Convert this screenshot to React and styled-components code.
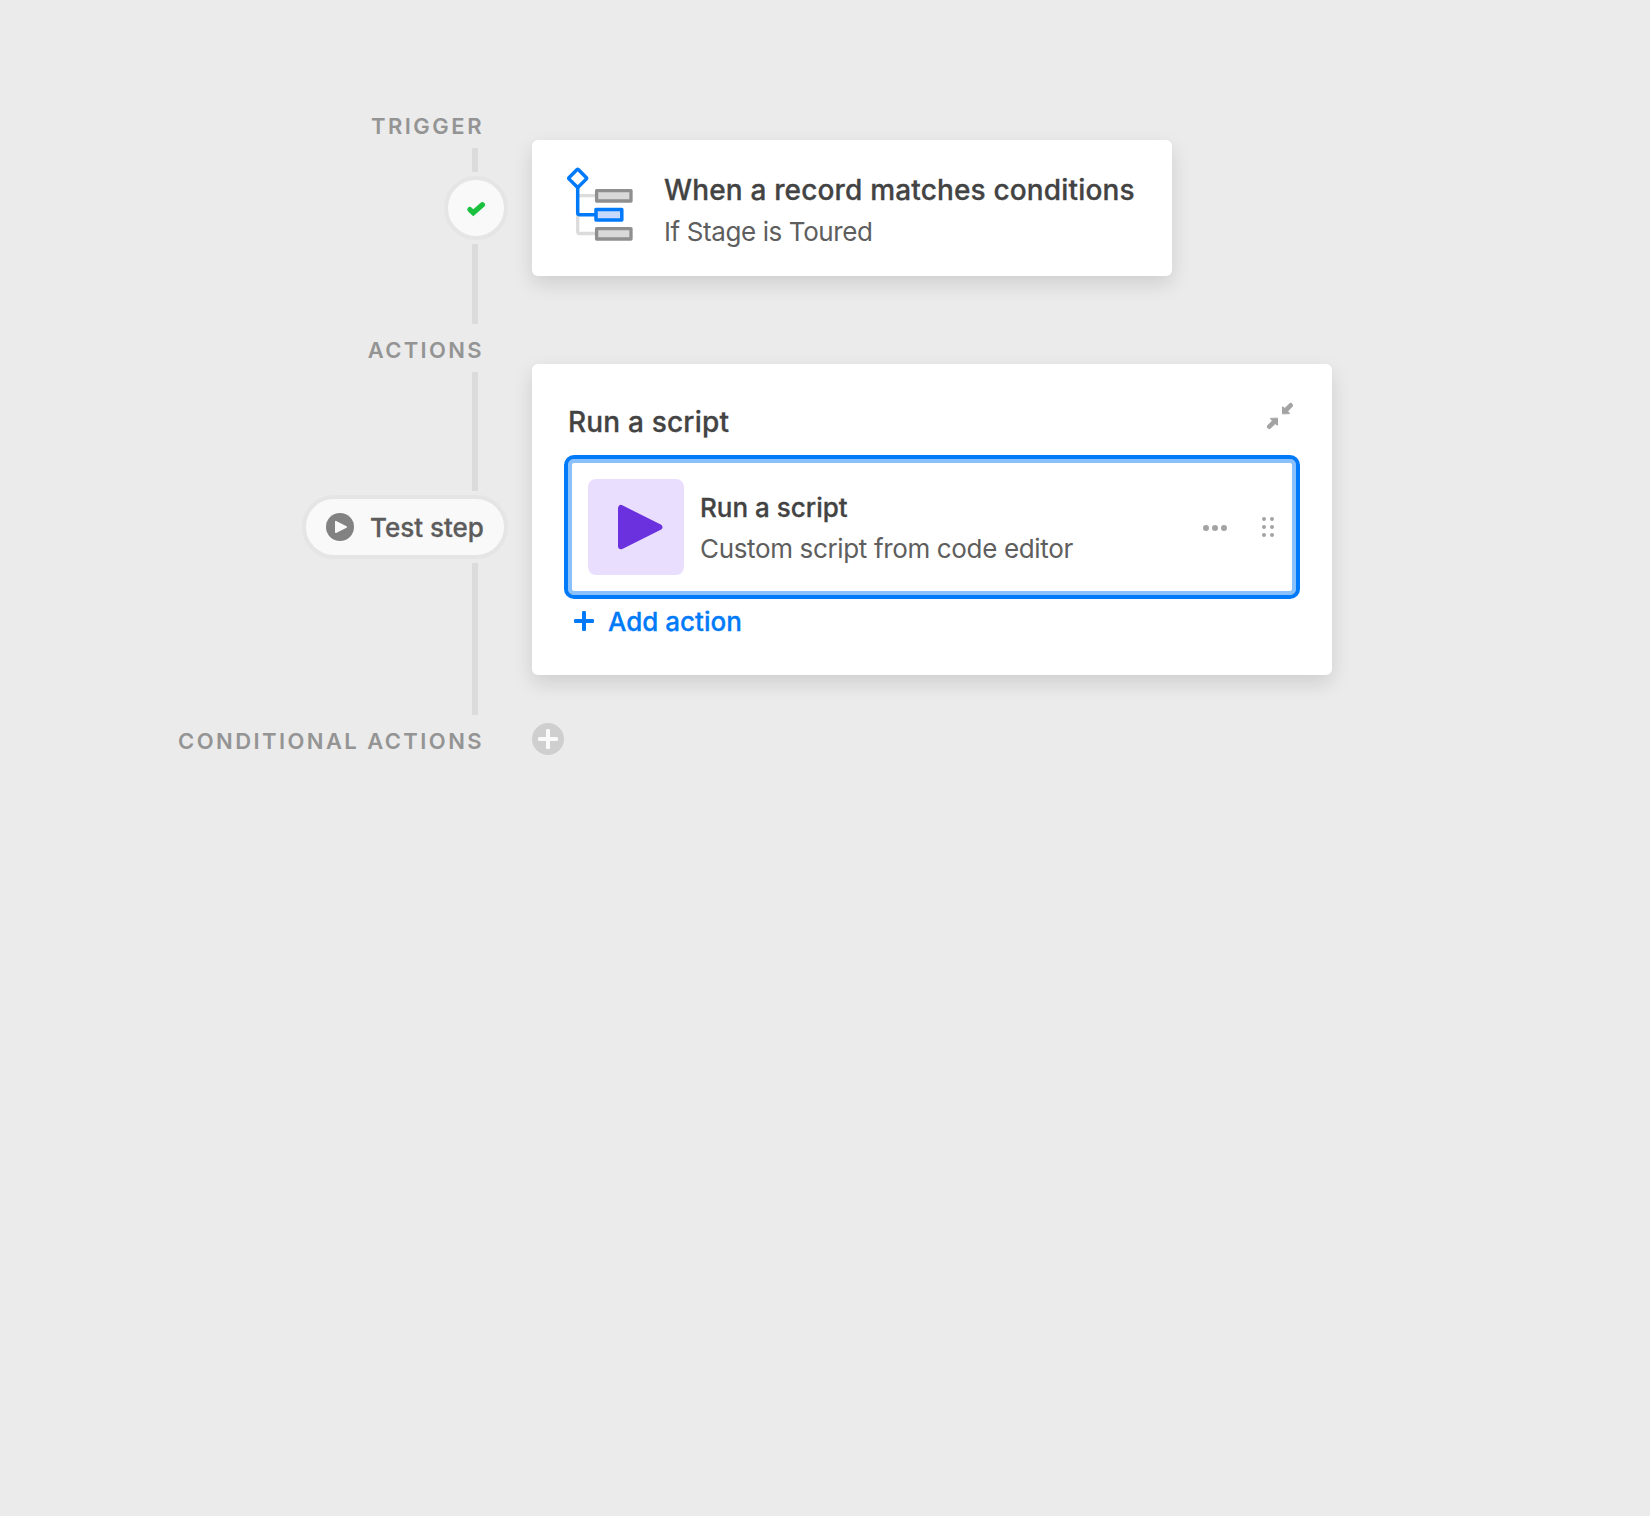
import React from "react";
import styled, { createGlobalStyle } from "styled-components";

const GlobalStyle = createGlobalStyle`
  *, *::before, *::after { box-sizing: border-box; }
  body {
    margin: 0;
    background: #ebebeb;
    font-family: Inter, "Liberation Sans", sans-serif;
    -webkit-font-smoothing: antialiased;
  }
  svg { display: block; flex: none; }
  button { font: inherit; border: 0; padding: 0; background: none; cursor: pointer; }
`;

const Canvas = styled.main`
  min-height: 1516px;
  padding-top: 110px;
  display: flex;
  flex-direction: column;
  gap: 10px;
`;

const Section = styled.section`
  display: grid;
  grid-template-columns: 508px 1fr;
  column-gap: 24px;
  align-items: start;
`;

const Rail = styled.div`
  display: flex;
  flex-direction: column;
  align-items: flex-end;
  gap: 4px;
`;

const RailLabel = styled.h2`
  margin: 0 24px 2px 0;
  font-size: 22px;
  font-weight: 600;
  line-height: 32px;
  letter-spacing: ${(p) => p.$tracking}px;
  text-transform: uppercase;
  white-space: nowrap;
  color: #949494;
`;

const Connector = styled.div`
  width: 6px;
  height: ${(p) => p.$length}px;
  margin-right: 30px;
  background: #dbdbdb;
`;

const StatusBadge = styled.div`
  width: 64px;
  height: 64px;
  border: 4px solid #e5e5e5;
  border-radius: 32px;
  background: #f9f9f9;
  display: flex;
  align-items: center;
  justify-content: center;
`;

const TestButton = styled.button`
  && {
    width: 206px;
    height: 64px;
    padding-left: 20px;
    border: 4px solid #e5e5e5;
    border-radius: 32px;
    background: #f9f9f9;
  }
  display: flex;
  align-items: center;
  gap: 16px;
`;

const TestLabel = styled.span`
  margin-top: 1px;
  font-size: 26px;
  font-weight: 500;
  line-height: 33px;
  color: #5c5c5c;
  -webkit-text-stroke: 0.3px currentColor;
`;

const Card = styled.article`
  width: ${(p) => p.$width}px;
  margin-top: 30px;
  border-radius: 6px;
  background: #fff;
  box-shadow: 0 8px 20px rgba(0, 0, 0, 0.12);
`;

const TriggerBody = styled.div`
  height: 136px;
  display: flex;
  align-items: flex-start;
  gap: 28px;
  padding: 24px 32px 0;
`;

const TriggerText = styled.div`
  display: flex;
  flex-direction: column;
  gap: 7px;
  padding-top: 8px;
`;

const Title = styled.h3`
  margin: 0;
  font-size: 28px;
  font-weight: 500;
  line-height: 36px;
  letter-spacing: ${(p) => p.$tracking || 0}px;
  color: #434343;
  -webkit-text-stroke: 0.3px currentColor;
  white-space: nowrap;
`;

const Subtitle = styled.p`
  margin: 0;
  font-size: 26px;
  line-height: 33px;
  letter-spacing: ${(p) => p.$tracking || 0}px;
  color: #5e5e5e;
  white-space: nowrap;
`;

const ActionsBody = styled.div`
  padding: 32px 32px 37px;
`;

const CardHeader = styled.header`
  height: 59px;
  padding: 4px 4px 0;
  display: flex;
  justify-content: space-between;

  ${Title} { margin-top: 4px; }
`;

const SelectedStep = styled.div`
  height: 144px;
  padding: 20px 22px 20px 20px;
  border: 4px solid #007af8;
  border-radius: 10px;
  box-shadow: inset 0 0 0 4px #8bc1fb;
  display: flex;
  align-items: center;
`;

const ScriptTile = styled.div`
  width: 96px;
  height: 96px;
  border-radius: 8px;
  background: #eadeff;
`;

const StepText = styled.div`
  flex: 1;
  margin: 2px 0 0 16px;
  display: flex;
  flex-direction: column;
  gap: 8px;
`;

const StepName = styled.h4`
  margin: 0;
  font-size: 26px;
  font-weight: 500;
  line-height: 33px;
  color: #434343;
  -webkit-text-stroke: 0.3px currentColor;
`;

const StepTools = styled.div`
  display: flex;
  align-items: center;
  gap: 35px;
`;

const MoreButton = styled.button`
  && { padding-top: 2px; }
`;

const AddAction = styled.button`
  && {
    margin-top: 6px;
    padding-left: 10px;
    font-size: 26px;
    font-weight: 500;
  }
  display: flex;
  align-items: flex-start;
  gap: 14px;
  line-height: 33px;
  color: #007af8;
  -webkit-text-stroke: 0.3px currentColor;

  svg { margin-top: 6px; }
`;

const AddGroup = styled.button`
  && { background: #cfcfcf; }
  width: 32px;
  height: 32px;
  margin-top: -2px;
  border-radius: 50%;
  display: flex;
  align-items: center;
  justify-content: center;
  color: #fafafa;
`;

const CheckIcon = () => (
  <svg width="32" height="32" viewBox="0 0 32 32" fill="none">
    <path d="M9.9 17.6L13.3 20.8L22.4 12.7" stroke="#19c13f" strokeWidth="5.2" strokeLinecap="round" />
  </svg>
);

const PlayCircleIcon = () => (
  <svg width="28" height="28" viewBox="0 0 28 28">
    <circle cx="14" cy="14" r="14" fill="#828282" />
    <path d="M9.8 8.7V19.3L20.2 14Z" fill="#f9f9f9" stroke="#f9f9f9" strokeWidth="1.6" strokeLinejoin="round" />
  </svg>
);

const ConditionIcon = () => (
  <svg width="72" height="80" viewBox="0 0 72 80" fill="none">
    <path d="M14 31.7H31M13.7 48V67.5Q13.7 69.5 15.7 69.5H31" stroke="#dcdcdc" strokeWidth="3.3" />
    <rect x="32.6" y="26.6" width="34.4" height="10.4" fill="#d9d9d9" stroke="#8f8f8f" strokeWidth="3.3" strokeLinejoin="round" />
    <rect x="32.6" y="64.6" width="34.4" height="10.4" fill="#d9d9d9" stroke="#8f8f8f" strokeWidth="3.3" strokeLinejoin="round" />
    <path d="M13.7 24V48.7Q13.7 50.7 15.7 50.7H31" stroke="#007af8" strokeWidth="3.5" />
    <rect x="32" y="45.6" width="25.8" height="10.4" fill="#c5dafd" stroke="#007af8" strokeWidth="3.5" strokeLinejoin="round" />
    <rect x="7.1" y="7.7" width="13.2" height="13.2" rx="0.8" transform="rotate(45 13.7 14.3)" fill="#fff" stroke="#007af8" strokeWidth="3.5" strokeLinejoin="round" />
  </svg>
);

const CollapseIcon = () => (
  <svg width="32" height="32" viewBox="0 0 32 32" fill="#a3a3a3" stroke="#a3a3a3" strokeLinejoin="round" strokeLinecap="round">
    <path d="M18.5 13.5V6.8L20.3 7.9L24.1 11.7L25.4 13.3Z" strokeWidth="1" />
    <path d="M26.7 5.3L21 11" strokeWidth="4.6" />
    <path d="M13.5 18.5V25.2L11.7 24.1L7.9 20.3L6.6 18.7Z" strokeWidth="1" />
    <path d="M5.3 26.7L11 21" strokeWidth="4.6" />
  </svg>
);

const ScriptIcon = () => (
  <svg width="96" height="96" viewBox="0 0 96 96">
    <path d="M33 29V67.2L71.4 48.1Z" fill="#6b31de" stroke="#6b31de" strokeWidth="6" strokeLinejoin="round" />
  </svg>
);

const MoreIcon = () => (
  <svg width="24" height="6" viewBox="0 0 24 6" fill="#a3a3a3">
    {[3, 12, 21].map((x) => (
      <circle key={x} cx={x} cy="3" r="3" />
    ))}
  </svg>
);

const DragIcon = () => (
  <svg width="12" height="20" viewBox="0 0 12 20" fill="#a3a3a3">
    {[2, 10, 18].map((y) => (
      <React.Fragment key={y}>
        <circle cx="2" cy={y} r="2" />
        <circle cx="10" cy={y} r="2" />
      </React.Fragment>
    ))}
  </svg>
);

const PlusIcon = () => (
  <svg width="20" height="20" viewBox="0 0 20 20" fill="currentColor">
    <rect x="0" y="8" width="20" height="4" rx="1.2" />
    <rect x="8" y="0" width="4" height="20" rx="1.2" />
  </svg>
);

export default function App() {
  return (
    <>
      <GlobalStyle />
      <Canvas>
        <Section>
          <Rail>
            <RailLabel $tracking={2.5}>Trigger</RailLabel>
            <Connector $length={24} />
            <StatusBadge>
              <CheckIcon />
            </StatusBadge>
            <Connector $length={80} />
          </Rail>
          <Card $width={640}>
            <TriggerBody>
              <ConditionIcon />
              <TriggerText>
                <Title $tracking={0.16}>When a record matches conditions</Title>
                <Subtitle $tracking={-0.4}>If Stage is Toured</Subtitle>
              </TriggerText>
            </TriggerBody>
          </Card>
        </Section>

        <Section>
          <Rail>
            <RailLabel $tracking={2.35}>Actions</RailLabel>
            <Connector $length={119} />
            <TestButton type="button">
              <PlayCircleIcon />
              <TestLabel>Test step</TestLabel>
            </TestButton>
            <Connector $length={152} />
          </Rail>
          <Card $width={800}>
            <ActionsBody>
              <CardHeader>
                <Title $tracking={0.18}>Run a script</Title>
                <CollapseIcon />
              </CardHeader>
              <SelectedStep>
                <ScriptTile>
                  <ScriptIcon />
                </ScriptTile>
                <StepText>
                  <StepName>Run a script</StepName>
                  <Subtitle $tracking={-0.35}>Custom script from code editor</Subtitle>
                </StepText>
                <StepTools>
                  <MoreButton type="button" aria-label="More options">
                    <MoreIcon />
                  </MoreButton>
                  <DragIcon />
                </StepTools>
              </SelectedStep>
              <AddAction type="button">
                <PlusIcon />
                Add action
              </AddAction>
            </ActionsBody>
          </Card>
        </Section>

        <Section>
          <Rail>
            <RailLabel $tracking={2.42}>Conditional actions</RailLabel>
          </Rail>
          <AddGroup type="button" aria-label="Add conditional actions">
            <PlusIcon />
          </AddGroup>
        </Section>
      </Canvas>
    </>
  );
}
